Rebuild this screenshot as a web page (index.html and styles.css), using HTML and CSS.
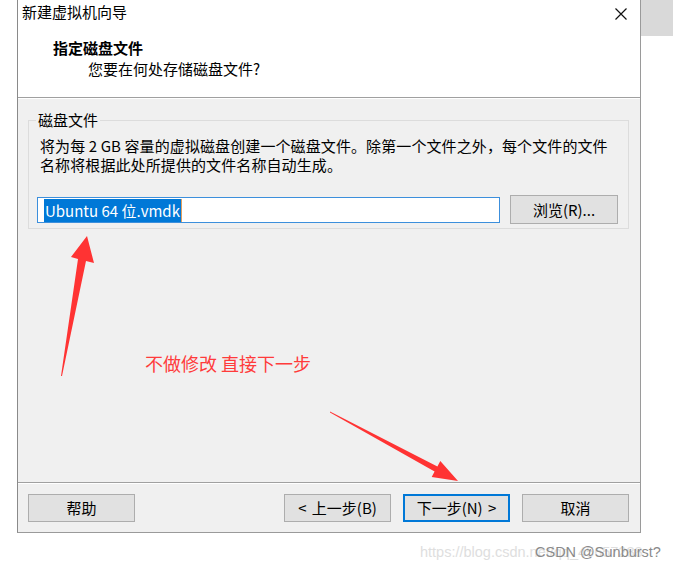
FILE: index.html
```html
<!DOCTYPE html>
<html>
<head>
    <meta charset="utf-8">
    <link rel="stylesheet" href="styles.css">
</head>
<body>
    <div class="screen">
        <div class="desk">
            <div class="window">
                <div class="titlebar">
                    <span class="title">新建虚拟机向导</span>
                    <svg class="close" width="12" height="12" viewBox="0 0 12 12">
                        <path d="M0.5 0.5 L11.5 11.5 M11.5 0.5 L0.5 11.5" stroke="#111" stroke-width="1.2" fill="none"/>
                    </svg>
                </div>
                <div class="header">
                    <div class="step-title">指定磁盘文件</div>
                    <div class="step-sub">您要在何处存储磁盘文件?</div>
                </div>
                <div class="content">
                    <fieldset class="group">
                        <legend>磁盘文件</legend>
                        <p class="desc">将为每 2 GB 容量的虚拟磁盘创建一个磁盘文件。除第一个文件之外，每个文件的文件<br>名称将根据此处所提供的文件名称自动生成。</p>
                        <div class="file-row">
                            <div class="file-input"><span class="selected">Ubuntu 64 位.vmdk</span><span class="caret"></span></div>
                            <button class="btn browse">浏览(R)...</button>
                        </div>
                    </fieldset>
                    <div class="note">不做修改 直接下一步</div>
                </div>
                <div class="footer">
                    <button class="btn">帮助</button>
                    <button class="btn push">&lt; 上一步(B)</button>
                    <button class="btn primary">下一步(N) &gt;</button>
                    <button class="btn">取消</button>
                </div>
            </div>
            <div class="side">
                <div class="side-top"></div>
            </div>
        </div>
        <div class="credit">
            <span class="url">https://blog.csdn.net/qq_45657288</span>
            <span class="author">CSDN @Sunburst?</span>
        </div>

        <svg class="marks" width="673" height="568" viewBox="0 0 673 568">
            <polygon fill="#ff3333" points="61,376 78,259 71,257 87,236 94,263 86,261 62,376"/>
            <polygon fill="#ff3333" points="330,411.5 437.4,466.4 440.3,461.1 458,481 431.7,476.9 434.6,471.6 330,412.5"/>
        </svg>
    </div>
</body>
</html>
```

FILE: styles.css
```css
body {
    margin: 0;
    background: #fff;
    font-family: "Noto Sans CJK SC", "Noto Sans", sans-serif;
    font-size: 15px;
    color: #000;
}

.screen {
    position: relative;
    width: 673px;
    height: 568px;
    overflow: hidden;
}

.desk {
    display: flex;
    padding-left: 17px;
}

.window {
    position: relative;
    width: 622px;
    border-left: 1px solid #8a8a8a;
    border-right: 1px solid #9a9a9a;
    border-bottom: 1px solid #9a9a9a;
    background: #f0f0f0;
}

.side {
    width: 32px;
}
.side-top {
    height: 36px;
    background: #d9d9d9;
}

.titlebar {
    display: flex;
    justify-content: space-between;
    align-items: flex-start;
    height: 27px;
    box-sizing: border-box;
    padding: 2px 13px 0 4px;
    background: #fff;
}
.title {
    line-height: 20px;
}
.close {
    margin-top: 6px;
}

.header {
    background: #fff;
    padding: 11px 0 18px 35px;
    border-bottom: 1px solid #a0a0a0;
    box-shadow: 0 1px 0 #fff;
}
.step-title {
    font-weight: bold;
    line-height: 20px;
}
.step-sub {
    margin-top: 1px;
    padding-left: 35px;
    line-height: 20px;
}

.content {
    height: 384px;
    padding-top: 13px;
    box-sizing: border-box;
}

.group {
    margin: 0 11px 0 10px;
    padding: 0 10px 4px 8px;
    border: 1px solid #dcdcdc;
    min-width: 0;
}
.group legend {
    padding: 0 2px;
    margin-left: -1px;
    line-height: 18px;
}

.desc {
    margin: 7px 0 0 3px;
    line-height: 19px;
    white-space: nowrap;
    letter-spacing: 0.1px;
}

.file-row {
    display: flex;
    align-items: center;
    gap: 10px;
    margin-top: 21px;
}
.file-input {
    flex: 1;
    height: 26px;
    box-sizing: border-box;
    border: 1px solid #3c8fdc;
    background: #fff;
    padding: 1px 0 0 6px;
    display: flex;
}
.selected {
    display: block;
    height: 23px;
    line-height: 23px;
    background: #0078d7;
    color: #fff;
    padding: 0 1px;
}
.caret {
    width: 1px;
    height: 23px;
    background: #e0a060;
}

.btn {
    font-family: inherit;
    font-size: 15px;
    color: #000;
    width: 107px;
    height: 28px;
    box-sizing: border-box;
    background: #e1e1e1;
    border: 1px solid #adadad;
    padding: 0;
    line-height: 24px;
    word-spacing: 2px;
}
.browse {
    width: 108px;
    height: 29px;
}
.btn.primary {
    border: 2px solid #0078d7;
}

.note {
    position: absolute;
    left: 127px;
    top: 351px;
    line-height: 24px;
    font-size: 18px;
    color: #ff3b3b;
}

.footer {
    display: flex;
    gap: 12px;
    padding: 11px 11px 10px 10px;
    border-top: 1px solid #a0a0a0;
    box-shadow: inset 0 1px 0 #fff;
}
.push {
    margin-left: auto;
}

.credit {
    position: relative;
    margin: 7px 0 0 420px;
    height: 22px;
}
.url {
    font-family: "Liberation Sans", sans-serif;
    font-size: 14.5px;
    line-height: 22px;
    color: #dedede;
    white-space: nowrap;
}
.author {
    position: absolute;
    left: 115px;
    top: 2px;
    font-family: "Liberation Sans", sans-serif;
    font-size: 14.5px;
    line-height: 20px;
    color: #8a8a8a;
    white-space: nowrap;
}

.marks {
    position: absolute;
    left: 0;
    top: 0;
    pointer-events: none;
}
```
